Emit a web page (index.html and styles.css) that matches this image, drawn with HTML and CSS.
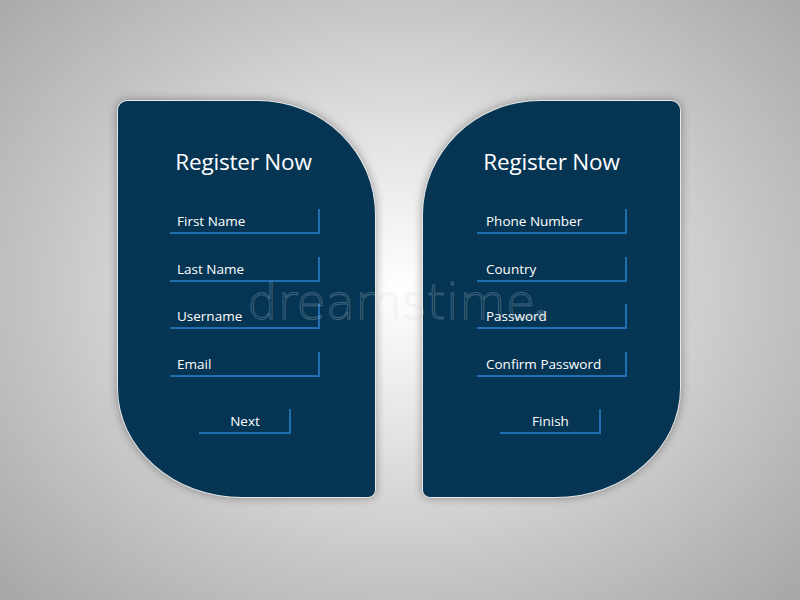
FILE: index.html
```html
<!DOCTYPE html>
<html>
<head>
<meta charset="utf-8">
<link rel="stylesheet" href="styles.css">
</head>
<body>
<div class="stage">
  <div class="card card-left">
    <h1 class="title">Register Now</h1>
    <div class="fields">
      <div class="field">First Name</div>
      <div class="field">Last Name</div>
      <div class="field">Username</div>
      <div class="field">Email</div>
    </div>
    <div class="btn btn-next">Next</div>
  </div>
  <div class="card card-right">
    <h1 class="title">Register Now</h1>
    <div class="fields">
      <div class="field">Phone Number</div>
      <div class="field">Country</div>
      <div class="field">Password</div>
      <div class="field">Confirm Password</div>
    </div>
    <div class="btn btn-finish">Finish</div>
  </div>
  <div class="watermark">dreamstime<span class="reg">®</span></div>
</div>
</body>
</html>
```
FILE: styles.css
```css
html, body {
  margin: 0;
  padding: 0;
  width: 800px;
  height: 600px;
  overflow: hidden;
}
body {
  background: radial-gradient(ellipse 70% 75% at 50% 48%, #ffffff 0%, #e6e6e6 30%, #c4c4c4 65%, #a6a6a6 100%);
  font-family: "Open Sans", "Liberation Sans", sans-serif;
  color: #ffffff;
}
.stage {
  position: relative;
  width: 800px;
  height: 600px;
  display: flex;
  justify-content: center;
  align-items: flex-start;
  gap: 46px;
  padding-top: 100px;
  padding-right: 2px;
  box-sizing: border-box;
}
.card {
  width: 259px;
  height: 398px;
  box-sizing: border-box;
  background: #053553;
  border: 1.5px solid #e8e8e8;
  box-shadow: 0 0 10px rgba(0,0,0,0.35);
  display: flex;
  flex-direction: column;
  padding-top: 45px;
}
.card-left {
  border-radius: 10px 118px 8px 125px / 10px 115px 8px 110px;
}
.card-right {
  border-radius: 118px 10px 125px 8px / 115px 10px 110px 8px;
}
.title {
  margin: 0;
  font-weight: 400;
  font-size: 22.5px;
  line-height: 32px;
  text-align: center;
  letter-spacing: -0.2px;
}
.card-left .title { padding-right: 6px; }
.card-right .title { padding-left: 0; }
.fields {
  display: flex;
  flex-direction: column;
  gap: 22.5px;
  margin-top: 31px;
}
.card-left .fields { margin-left: 52px; }
.card-right .fields { margin-left: 54px; }
.field, .btn {
  height: 25px;
  box-sizing: border-box;
  border-bottom: 2px solid #1f6fb0;
  border-right: 2px solid #1f6fb0;
  font-size: 13.5px;
  line-height: 25px;
}
.field {
  width: 150px;
  padding-left: 7px;
}
.card-right .field { padding-left: 9px; }
.btn {
  margin-top: 32px;
  text-align: center;
  padding-left: 2px;
  line-height: 24px;
}
.btn-next { width: 92px; margin-left: 81px; }
.btn-finish { width: 101px; margin-left: 77px; }
.watermark {
  position: absolute;
  left: 247px;
  top: 274px;
  font-family: "DejaVu Sans", sans-serif;
  font-weight: 200;
  font-size: 48px;
  letter-spacing: 0px;
  color: transparent;
  -webkit-text-stroke: 1px rgba(200, 210, 220, 0.3);
  pointer-events: none;
}
.reg {
  font-size: 11px;
}
```
